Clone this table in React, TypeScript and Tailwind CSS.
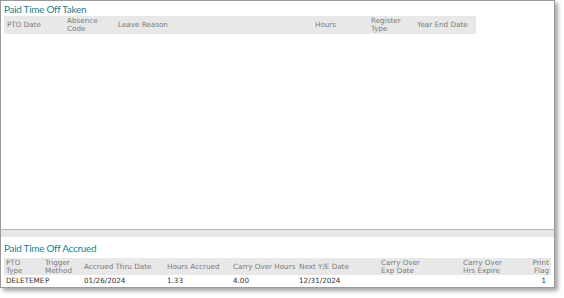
const font = "font-['DejaVu_Sans',Verdana,sans-serif]";

const takenCols = [
  { label: ['PTO Date'], w: 'w-[60px]' },
  { label: ['Absence', 'Code'], w: 'w-[51px]' },
  { label: ['Leave Reason'], w: 'w-[197px]' },
  { label: ['Hours'], w: 'w-[56px]' },
  { label: ['Register', 'Type'], w: 'w-[46px]' },
  { label: ['Year End Date'], w: 'w-[59px]' },
]

const accruedCols = [
  { label: ['PTO', 'Type'], w: 'w-[39px]', value: 'DELETEME' },
  { label: ['Trigger', 'Method'], w: 'w-[39px]', value: 'P' },
  { label: ['Accrued Thru Date'], w: 'w-[83px]', value: '01/26/2024' },
  { label: ['Hours Accrued'], w: 'w-[66px]', value: '1.33' },
  { label: ['Carry Over Hours'], w: 'w-[66px]', value: '4.00' },
  { label: ['Next Y/E Date'], w: 'w-[82px]', value: '12/31/2024' },
  { label: ['Carry Over', 'Exp Date'], w: 'w-[82px]', value: '' },
  { label: ['Carry Over', 'Hrs Expire'], w: 'w-[62px]', value: '' },
]

function HeadCell({ label, w }: { label: string[]; w: string }) {
  return (
    <div className={`${w} flex shrink-0 flex-col justify-center leading-[8px]`}>
      {label.map((l) => (
        <span key={l} className="whitespace-nowrap">{l}</span>
      ))}
    </div>
  )
}

export default function App() {
  return (
    <div className="h-[298px] w-[564px] bg-white">
      <div
        className={`flex h-[288px] w-[555px] flex-col border border-[#9a9a9a] bg-white shadow-[3px_3px_4px_rgba(0,0,0,0.35)] ${font}`}
      >
        <h2 className="px-[3px] pt-[2px] font-['Lato',sans-serif] text-[10px] leading-[12px] tracking-[-0.3px] text-[#1b7f8e]">
          Paid Time Off Taken
        </h2>
        <div className="mx-[3px] mt-[1px] flex h-[18px] w-[472px] bg-[#e8e8e8] pl-[3px] text-[7.2px] text-[#7a7a7a]">
          {takenCols.map((c) => (
            <HeadCell key={c.label.join()} label={c.label} w={c.w} />
          ))}
        </div>
        <div className="flex-1" />
        <div className="h-[8px] border-t border-[#b4b4b4] bg-[#e6e6e6]" />
        <h2 className="mt-[5px] px-[3px] font-['Lato',sans-serif] text-[10px] leading-[12px] tracking-[-0.3px] text-[#1b7f8e]">
          Paid Time Off Accrued
        </h2>
        <div className="mx-[3px] mt-[4px] flex h-[17px] bg-[#e8e8e8] pl-[2px] text-[7.2px] text-[#7a7a7a]">
          {accruedCols.map((c) => (
            <HeadCell key={c.label.join()} label={c.label} w={c.w} />
          ))}
          <div className="flex min-w-0 flex-1 flex-col items-end justify-center pr-[2px] leading-[8px]">
            <span>Print</span>
            <span>Flag</span>
          </div>
        </div>
        <div className="mx-[3px] flex h-[12px] items-center pl-[2px] text-[7.2px] text-[#333]">
          {accruedCols.map((c) => (
            <div key={c.label.join()} className={`${c.w} shrink-0 overflow-hidden whitespace-nowrap`}>
              {c.value}
            </div>
          ))}
          <div className="flex-1 pr-[5px] text-right">1</div>
        </div>
      </div>
    </div>
  )
}
